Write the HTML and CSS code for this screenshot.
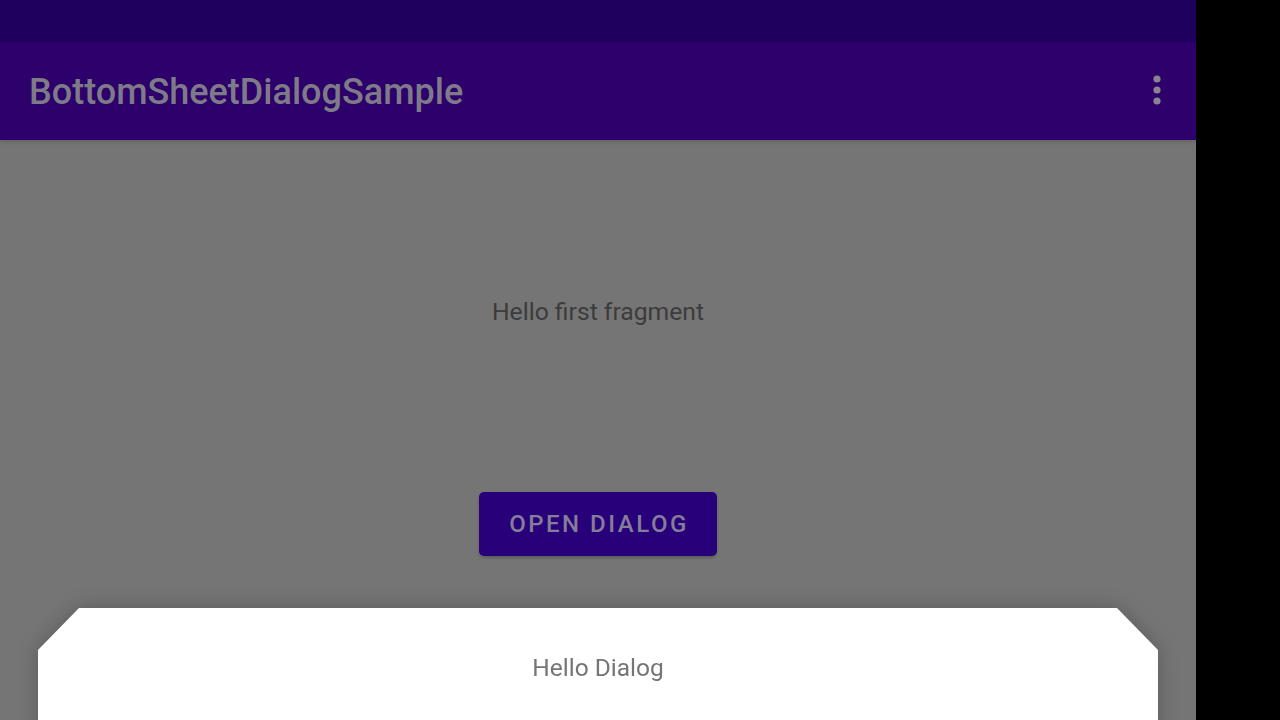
FILE: index.html
```html
<!DOCTYPE html>
<html>
<head>
<meta charset="utf-8">
<link rel="stylesheet" href="styles.css">
</head>
<body>
<div class="screen">
  <div class="status"></div>
  <div class="appbar">
    <div class="title">BottomSheetDialogSample</div>
    <svg class="more" width="12" height="32" viewBox="0 0 12 32">
      <circle cx="6" cy="5" r="3.6" fill="#88848f"/>
      <circle cx="6" cy="16" r="3.6" fill="#88848f"/>
      <circle cx="6" cy="27" r="3.6" fill="#88848f"/>
    </svg>
  </div>
  <div class="content">
    <div class="hello">Hello first fragment</div>
    <button class="btn">OPEN DIALOG</button>
  </div>
  <div class="sheet-wrap">
    <div class="sheet">
      <div class="sheet-text">Hello Dialog</div>
    </div>
  </div>
</div>
</body>
</html>
```
FILE: styles.css
```css
html, body {
  margin: 0;
  padding: 0;
  background: #000;
  width: 1280px;
  height: 720px;
  overflow: hidden;
  font-family: Roboto, "Noto Sans", sans-serif;
}
.screen {
  position: relative;
  width: 1196px;
  height: 720px;
  display: flex;
  flex-direction: column;
  background: #757575;
  overflow: hidden;
}
.status {
  height: 42px;
  background: #1f005e;
  flex: none;
}
.appbar {
  height: 98px;
  background: #2d006c;
  flex: none;
  display: flex;
  align-items: center;
  justify-content: space-between;
  padding: 0 33px 0 29px;
  box-shadow: 0 2px 4px rgba(0,0,0,0.15);
}
.title {
  color: #7e7b88;
  font-size: 36px;
  font-weight: 500;
  letter-spacing: 0;
  margin-top: 2px;
}
.more {
  display: block;
  margin-top: -2px;
}
.content {
  flex: 1;
  display: flex;
  flex-direction: column;
  align-items: center;
}
.hello {
  margin-top: 157px;
  font-size: 24.7px;
  color: #3c3c3c;
}
.btn {
  margin-top: 166px;
  width: 238px;
  height: 64px;
  border: none;
  border-radius: 5px;
  background: #27007a;
  color: #857e98;
  font-family: Roboto, sans-serif;
  font-weight: 500;
  font-size: 24px;
  letter-spacing: 2.5px;
  box-shadow: 0 2px 3px rgba(0,0,0,0.2);
  padding: 0 0 0 2px;
}
.sheet-wrap {
  position: absolute;
  left: 38px;
  top: 608px;
  width: 1120px;
  height: 140px;
  filter: drop-shadow(0 0 10px rgba(0,0,0,0.22));
}
.sheet {
  width: 100%;
  height: 100%;
  background: #fff;
  clip-path: polygon(41px 0, 1079px 0, 1120px 42px, 1120px 100%, 0 100%, 0 42px);
  display: flex;
  justify-content: center;
}
.sheet-text {
  margin-top: 45px;
  font-size: 24.5px;
  color: #757575;
}
```
